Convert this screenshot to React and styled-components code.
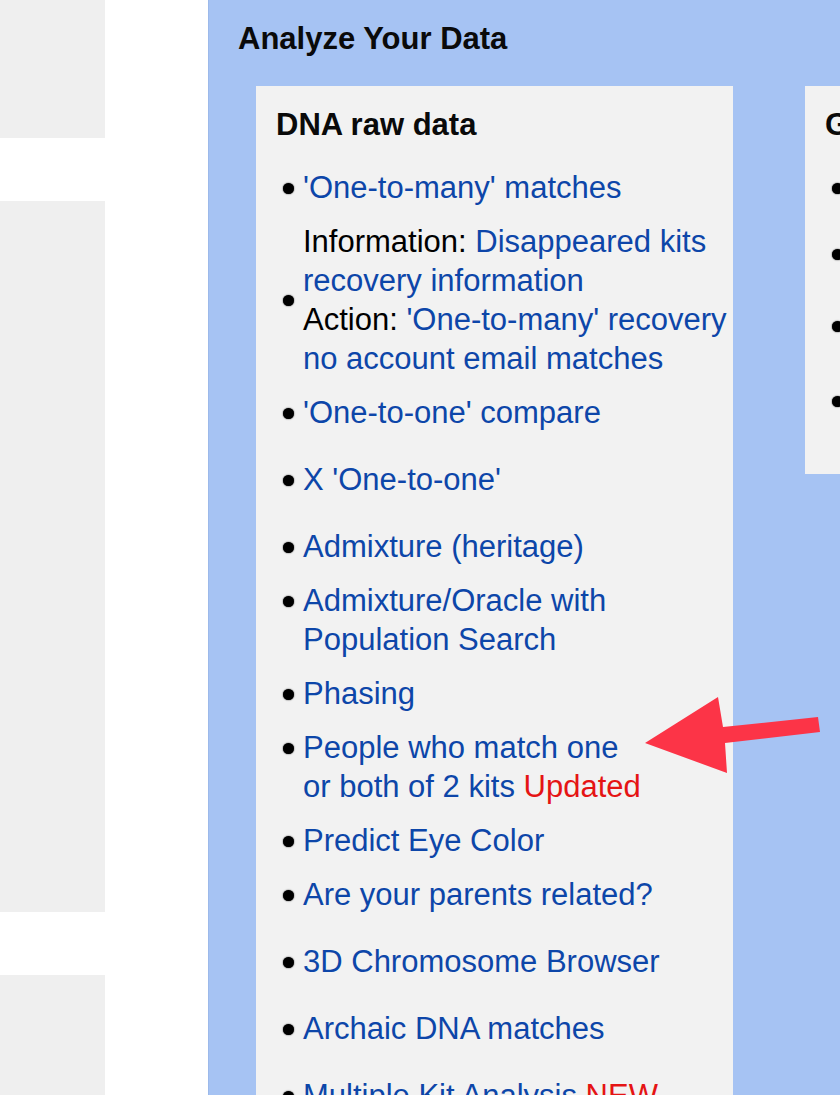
import React from "react";
import styled, { createGlobalStyle } from "styled-components";

const GlobalStyle = createGlobalStyle`
  html, body {
    margin: 0;
    padding: 0;
    overflow: hidden;
    background: #ffffff;
  }
  body {
    font-family: "Liberation Sans", Arial, Helvetica, sans-serif;
  }
`;

const Page = styled.div`
  display: flex;
  gap: 103px;
  width: 840px;
  height: 1095px;
  overflow: hidden;
`;

const Sidebar = styled.aside`
  flex: 0 0 105px;
  display: flex;
  flex-direction: column;
  gap: 63px;
`;

const SidePanel = styled.div`
  background: #efefef;
  height: ${(p) => p.$h}px;
  flex-shrink: 0;
`;

const Analyze = styled.section`
  flex: 0 0 auto;
  width: 1100px;
  background: #a6c3f3;
  border-left: 1px solid #9cb9ea;
  padding: 19px 0 0 29px;
  box-sizing: border-box;
`;

const SectionTitle = styled.h2`
  margin: 0;
  font-size: 31px;
  line-height: 39px;
  font-weight: bold;
  color: #0a0a0a;
`;

const Cards = styled.div`
  display: flex;
  align-items: flex-start;
  gap: 72px;
  margin: 28px 0 0 18px;
`;

const Card = styled.div`
  background: #f2f2f2;
  width: ${(p) => p.$w}px;
  padding: 19px 0 ${(p) => p.$pb}px 20px;
  box-sizing: border-box;
  flex-shrink: 0;
`;

const CardTitle = styled.h3`
  margin: 0 0 9px;
  font-size: 31px;
  line-height: 39px;
  font-weight: bold;
  color: #0a0a0a;
  white-space: nowrap;
`;

const List = styled.ul`
  display: flex;
  flex-direction: column;
  list-style: none;
  margin: 0;
  padding: 0;
`;

const Item = styled.li`
  display: flex;
  align-items: ${(p) => (p.$centered ? "center" : "flex-start")};
  margin-top: ${(p) => p.$gap ?? 15}px;
  font-size: 31px;
  line-height: 39px;
  color: #000;
  white-space: nowrap;
`;

const Bullet = styled.span`
  flex: 0 0 11px;
  width: 11px;
  height: 11px;
  margin: ${(p) => (p.$centered ? "0" : "15px")} 9px 0 7px;
  border-radius: 50%;
  background: #000;
  box-shadow: 0 0 1.5px #000;
`;

const Link = styled.a`
  color: #0d46a9;
  text-decoration: none;
`;

const Tag = styled.span`
  color: #e51414;
`;

const Arrow = styled.svg`
  position: absolute;
  left: 640px;
  top: 690px;
  pointer-events: none;
`;

const Entry = ({ gap, centered, children }) => (
  <Item $gap={gap} $centered={centered}>
    <Bullet $centered={centered} />
    <div>{children}</div>
  </Item>
);

export default function App() {
  return (
    <>
      <GlobalStyle />
      <Page>
        <Sidebar>
          <SidePanel $h={138} />
          <SidePanel $h={711} />
          <SidePanel $h={400} />
        </Sidebar>

        <Analyze>
          <SectionTitle>Analyze Your Data</SectionTitle>
          <Cards>
            <Card $w={477} $pb={40}>
              <CardTitle>DNA raw data</CardTitle>
              <List>
                <Entry>
                  <Link href="#">'One-to-many' matches</Link>
                </Entry>
                <Entry centered>
                  Information: <Link href="#">Disappeared kits</Link>
                  <br />
                  <Link href="#">recovery information</Link>
                  <br />
                  Action: <Link href="#">'One-to-many' recovery</Link>
                  <br />
                  <Link href="#">no account email matches</Link>
                </Entry>
                <Entry>
                  <Link href="#">'One-to-one' compare</Link>
                </Entry>
                <Entry gap={28}>
                  <Link href="#">X 'One-to-one'</Link>
                </Entry>
                <Entry gap={28}>
                  <Link href="#">Admixture (heritage)</Link>
                </Entry>
                <Entry>
                  <Link href="#">
                    Admixture/Oracle with
                    <br />
                    Population Search
                  </Link>
                </Entry>
                <Entry>
                  <Link href="#">Phasing</Link>
                </Entry>
                <Entry>
                  <Link href="#">
                    People who match one
                    <br />
                    or both of 2 kits
                  </Link>{" "}
                  <Tag>Updated</Tag>
                </Entry>
                <Entry>
                  <Link href="#">Predict Eye Color</Link>
                </Entry>
                <Entry>
                  <Link href="#">Are your parents related?</Link>
                </Entry>
                <Entry gap={28}>
                  <Link href="#">3D Chromosome Browser</Link>
                </Entry>
                <Entry gap={28}>
                  <Link href="#">Archaic DNA matches</Link>
                </Entry>
                <Entry gap={28}>
                  <Link href="#">Multiple Kit Analysis</Link> <Tag>NEW</Tag>
                </Entry>
              </List>
            </Card>

            <Card $w={420} $pb={54}>
              <CardTitle>GEDCOM / Genealogy</CardTitle>
              <List>
                <Entry>
                  <Link href="#">Find GEDCOMs</Link>
                </Entry>
                <Entry gap={27}>
                  <Link href="#">Find a person</Link>
                </Entry>
                <Entry gap={33}>
                  <Link href="#">Pedigree charts</Link>
                </Entry>
                <Entry gap={36}>
                  <Link href="#">Surname search</Link>
                </Entry>
              </List>
            </Card>
          </Cards>
        </Analyze>
      </Page>

      <Arrow width="190" height="95" viewBox="0 0 190 95">
        <polygon
          points="5,53 78,7 83,37 178,27 180,42 85,53 87,83"
          fill="#fc3447"
        />
      </Arrow>
    </>
  );
}
